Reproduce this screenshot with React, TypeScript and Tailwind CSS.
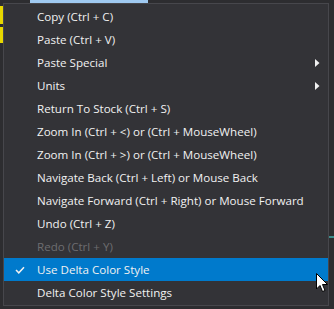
import React from "react";

type Item = { label: string; arrow?: boolean; disabled?: boolean; checked?: boolean; active?: boolean };

const items: Item[] = [
  { label: "Copy (Ctrl + C)" },
  { label: "Paste (Ctrl + V)" },
  { label: "Paste Special", arrow: true },
  { label: "Units", arrow: true },
  { label: "Return To Stock (Ctrl + S)" },
  { label: "Zoom In (Ctrl + <) or (Ctrl + MouseWheel)" },
  { label: "Zoom In (Ctrl + >) or (Ctrl + MouseWheel)" },
  { label: "Navigate Back (Ctrl + Left) or Mouse Back" },
  { label: "Navigate Forward (Ctrl + Right) or Mouse Forward" },
  { label: "Undo (Ctrl + Z)" },
  { label: "Redo (Ctrl + Y)", disabled: true },
  { label: "Use Delta Color Style", checked: true, active: true },
  { label: "Delta Color Style Settings" },
];

export default function App() {
  return (
    <div
      className="relative w-[334px] h-[309px] bg-[#2d2d30] overflow-hidden"
      style={{ fontFamily: '"Open Sans", "Noto Sans", sans-serif' }}
    >
      {/* background bits behind menu */}
      <div className="absolute left-[30px] top-0 w-[118px] h-[3px] bg-[#9fc9f0]" />
      <div className="absolute left-0 top-[6px] w-[3px] h-[18px] bg-[#e8d800]" />
      <div className="absolute left-0 top-[27px] w-[3px] h-[16px] bg-[#e8d800]" />
      <div className="absolute right-0 top-[236px] w-[5px] h-[2px] bg-[#3c8c8c]" />

      <div className="absolute left-[3px] top-[3px] w-[326px] border border-[#47474c] bg-[#333337] pt-[1px] pb-[1px]">
        {items.map((it, i) => (
          <div
            key={i}
            className={
              "relative flex items-center h-[23px] pl-[33px] text-[11.6px] " +
              (it.active ? "bg-[#007acc] " : "") +
              (it.disabled ? "text-[#6d6d70]" : "text-[#f1f1f1]")
            }
          >
            {it.checked && (
              <svg className="absolute left-[11px] top-[8px]" width="10" height="8" viewBox="0 0 10 8">
                <path d="M1 4 L3.8 6.8 L9 1.2" fill="none" stroke="#f1f1f1" strokeWidth="1.5" />
              </svg>
            )}
            <span className="whitespace-nowrap">{it.label}</span>
            {it.arrow && (
              <svg className="absolute left-[311px] top-[8px]" width="5" height="8" viewBox="0 0 5 8">
                <path d="M0 0 L4.5 4 L0 8 Z" fill="#f1f1f1" />
              </svg>
            )}
          </div>
        ))}
      </div>

      {/* mouse cursor */}
      <svg className="absolute left-[316px] top-[273px]" width="13" height="20" viewBox="0 0 13 20">
        <path
          d="M0.5 0.5 L0.5 16 L4 12.5 L6.5 18.5 L9 17.5 L6.5 11.5 L11.5 11.5 Z"
          fill="#ffffff"
          stroke="#000000"
          strokeWidth="1"
          strokeLinejoin="round"
        />
      </svg>
    </div>
  );
}
